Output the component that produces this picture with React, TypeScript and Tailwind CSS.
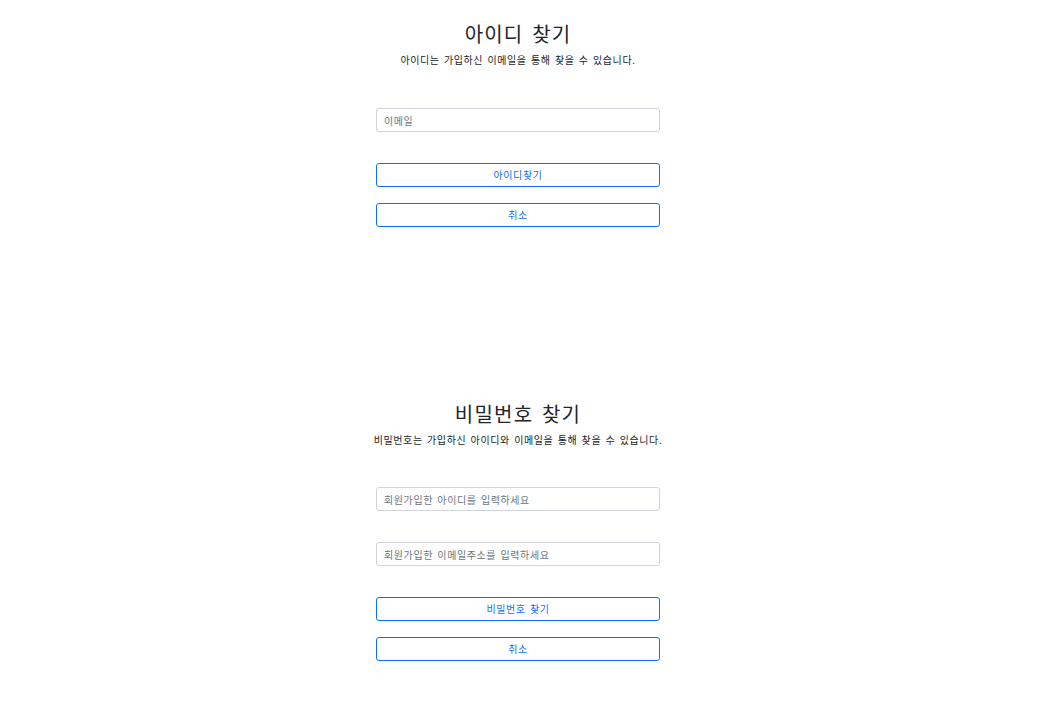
import React from "react";

const font = { fontFamily: '"Noto Sans CJK KR", "Noto Sans", sans-serif' };

function Field({ placeholder }: { placeholder: string }) {
  return (
    <input
      type="text"
      placeholder={placeholder}
      className="block w-full h-[24px] px-[7px] border border-[#ced4da] rounded-[3px] text-[10px] tracking-[0.06em] [word-spacing:0.15em] text-[#212529] placeholder:text-[#6c757d] outline-none bg-white"
    />
  );
}

function OutlineButton({ children }: { children: React.ReactNode }) {
  return (
    <button
      type="button"
      className="block w-full h-[24px] border border-[#0d6efd] rounded-[3px] text-[10px] leading-none tracking-[0.06em] [word-spacing:0.15em] text-[#0d6efd] bg-white"
    >
      {children}
    </button>
  );
}

export default function App() {
  return (
    <div className="w-[1036px] min-h-[719px] bg-white flex flex-col items-center" style={font}>
      {/* 아이디 찾기 */}
      <section className="flex flex-col items-center pt-[20px]">
        <h3 className="text-[20px] leading-[28px] font-normal tracking-[0.06em] [word-spacing:0.15em] text-[#212529]">
          아이디 찾기
        </h3>
        <p className="mt-[4px] text-[10px] leading-[16px] tracking-[0.06em] [word-spacing:0.15em] text-[#212529] whitespace-nowrap">
          아이디는 가입하신 이메일을 통해 찾을 수 있습니다.
        </p>
        <form className="w-[284px] mt-[40px]">
          <Field placeholder="이메일" />
          <div className="mt-[31px]">
            <OutlineButton>아이디찾기</OutlineButton>
          </div>
          <div className="mt-[16px]">
            <OutlineButton>취소</OutlineButton>
          </div>
        </form>
      </section>

      {/* 비밀번호 찾기 */}
      <section className="flex flex-col items-center mt-[173px]">
        <h3 className="text-[20px] leading-[28px] font-normal tracking-[0.06em] [word-spacing:0.15em] text-[#212529]">
          비밀번호 찾기
        </h3>
        <p className="mt-[4px] text-[10px] leading-[16px] tracking-[0.06em] [word-spacing:0.15em] text-[#212529] whitespace-nowrap">
          비밀번호는 가입하신 아이디와 이메일을 통해 찾을 수 있습니다.
        </p>
        <form className="w-[284px] mt-[39px]">
          <Field placeholder="회원가입한 아이디를 입력하세요" />
          <div className="mt-[31px]">
            <Field placeholder="회원가입한 이메일주소를 입력하세요" />
          </div>
          <div className="mt-[31px]">
            <OutlineButton>비밀번호 찾기</OutlineButton>
          </div>
          <div className="mt-[16px]">
            <OutlineButton>취소</OutlineButton>
          </div>
        </form>
      </section>
    </div>
  );
}
